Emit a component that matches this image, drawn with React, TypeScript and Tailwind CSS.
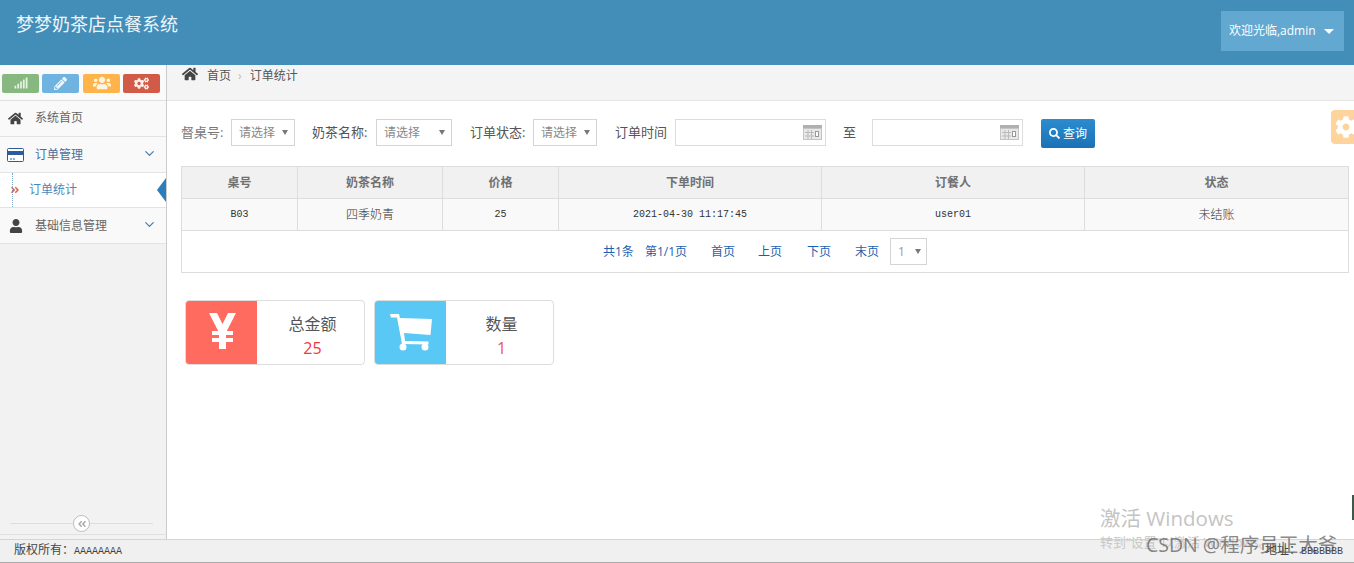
import type { ReactNode } from 'react'
import { ChevronDown } from 'lucide-react'
import {
  FaAngleDoubleLeft,
  FaAngleDoubleRight,
  FaCog,
  FaCogs,
  FaHome,
  FaPencilAlt,
  FaSearch,
  FaSignal,
  FaUser,
  FaUsers,
} from 'react-icons/fa'

const sans = 'font-["Open_Sans","Noto_Sans_CJK_SC",sans-serif]'

const columns = [
  { title: '桌号', width: 'w-[116px]', value: 'B03', mono: true },
  { title: '奶茶名称', width: 'w-[145px]', value: '四季奶青', mono: false },
  { title: '价格', width: 'w-[116px]', value: '25', mono: true },
  { title: '下单时间', width: 'w-[263px]', value: '2021-04-30 11:17:45', mono: true },
  { title: '订餐人', width: 'w-[263px]', value: 'user01', mono: true },
  { title: '状态', width: 'flex-1', value: '未结账', mono: false },
]

function Caret() {
  return <span className="h-0 w-0 border-x-[3px] border-t-[5px] border-x-transparent border-t-[#777]" />
}

function FakeSelect({ width, label }: { width: string; label: string }) {
  return (
    <div className={`${width} flex h-[27px] items-center justify-between border border-[#d5d5d5] bg-white pl-[7px] pr-[6px] text-[12px] text-[#888]`}>
      <span className="pt-[1px]">{label}</span>
      <Caret />
    </div>
  )
}

function CalendarIcon() {
  return (
    <svg width="19" height="15" viewBox="0 0 19 15">
      <rect x="0" y="0" width="19" height="15" fill="#e8e8e8" />
      <rect x="0" y="0" width="19" height="3" fill="#b0b0b0" />
      <rect x="0.5" y="3.500" width="18" height="11" fill="none" stroke="#c4c4c4" />
      <path d="M2 7.500H11M2 11H11M5 5V14M8.500 5V14" stroke="#bbb" fill="none" />
      <rect x="12.500" y="6.500" width="3" height="5" fill="#fff" stroke="#999" />
    </svg>
  )
}

function CardIcon() {
  return (
    <svg width="17" height="14" viewBox="0 0 17 14">
      <rect x="0.5" y="0.500" width="16" height="13" rx="1" fill="#fff" stroke="#2d5c9b" />
      <rect x="1" y="3" width="15" height="4" fill="#2d5c9b" />
      <path d="M3 11H5M6 11H8" stroke="#2d5c9b" />
    </svg>
  )
}

function YenIcon() {
  return (
    <svg width="27" height="36" viewBox="0 0 27 36" fill="#fff">
      <path d="M0 0H8L13.500 11L19 0H27L17.800 18H24V22H17V25H24V29H17V36H10V29H3V25H10V22H3V18H9.200Z" />
    </svg>
  )
}

function CartIcon() {
  return (
    <svg width="42" height="37" viewBox="0 0 42 37" fill="#fff" className="mt-[4px]">
      <path d="M0 0H9L10 4L42 5L40.500 21L14 19L15 27L38.500 27.500V30.500L12 30L7 3.500H1Z" />
      <circle cx="13" cy="33" r="3.500" />
      <circle cx="35" cy="33" r="3.500" />
    </svg>
  )
}

function DateInput() {
  return (
    <div className="flex h-[27px] w-[151px] items-center justify-end border border-[#dcdcdc] bg-white pr-[3px]">
      <CalendarIcon />
    </div>
  )
}

function NavRow({ icon, label, open, text }: { icon: ReactNode; label: string; open?: boolean; text: string }) {
  return (
    <div className="flex h-[36px] items-center border-b border-[#e3e3e3] bg-[#f9f9f9] pl-[7px] pr-[9px]">
      <span className="flex w-[28px] justify-start">{icon}</span>
      <span className={`text-[12px] ${text}`}>{label}</span>
      {open && <ChevronDown size={15} strokeWidth={2} className="mb-[3px] ml-auto text-[#4a7fb0]" />}
    </div>
  )
}

function StatCard({ color, icon, label, value, valueColor }: { color: string; icon: ReactNode; label: string; value: string; valueColor: string }) {
  return (
    <div className="flex h-[65px] w-[180px] overflow-hidden rounded-[4px] border border-[#dddddd] bg-white">
      <div className={`${color} flex w-[71px] items-center justify-center pb-[4px] pl-[1px]`}>{icon}</div>
      <div className="flex flex-1 flex-col items-center justify-center pl-[4px] pt-[7px] text-[16px] leading-[24px] text-[#555]">
        <span>{label}</span>
        <span className={valueColor}>{value}</span>
      </div>
    </div>
  )
}

export default function App() {
  return (
    <div className={`${sans} relative flex h-[563px] w-[1354px] flex-col overflow-hidden bg-white text-[#555]`}>
      {/* header */}
      <header className="flex h-[65px] shrink-0 justify-between bg-[#438eb9]">
        <h1 className="pl-[16px] pt-[12px] text-[18px] leading-[24px] font-normal text-[#eef5fa]">梦梦奶茶店点餐系统</h1>
        <div className="mr-[10px] mt-[11px] flex h-[40px] w-[123px] items-center bg-[#62a8d1] pl-[8px] text-[12px] text-white">
          欢迎光临,admin
          <span className="ml-[8px] h-0 w-0 border-x-[5px] border-t-[5px] border-x-transparent border-t-white" />
        </div>
      </header>

      <div className="flex min-h-0 flex-1">
        {/* sidebar */}
        <aside className="flex w-[167px] shrink-0 flex-col border-r border-[#cccccc] bg-[#f2f2f2]">
          <div className="flex h-[36px] shrink-0 items-center gap-[3px] border-b border-[#e0e0e0] bg-[#fafafa] pl-[2px] pt-[1px]">
            <span className="flex h-[19px] w-[37px] items-center justify-center rounded-[2px] bg-[#87b87f] text-[#e8f2e6]"><FaSignal size={14} /></span>
            <span className="flex h-[19px] w-[37px] items-center justify-center rounded-[2px] bg-[#6fb3e0] text-[#eef7fc]"><FaPencilAlt size={13} /></span>
            <span className="ml-[1px] flex h-[19px] w-[37px] items-center justify-center rounded-[2px] bg-[#ffb44b] text-[#fff4e2]"><FaUsers size={18} /></span>
            <span className="flex h-[19px] w-[37px] items-center justify-center rounded-[2px] bg-[#d15b47] text-[#fdeeea]"><FaCogs size={15} /></span>
          </div>
          <NavRow icon={<FaHome size={15} className="ml-[1px] text-[#444]" />} label="系统首页" text="pb-[1px] text-[#666]" />
          <NavRow icon={<CardIcon />} label="订单管理" text="pt-[1px] text-[#4a6f9a]" open />
          <div className="relative flex h-[35px] items-center border-b border-[#e3e3e3] bg-white pl-[10px]">
            <span className="absolute left-[12px] top-0 h-full border-l border-dotted border-[#7aa6c8]" />
            <FaAngleDoubleRight size={10} className="relative text-[#d9634c]" />
            <span className="ml-[9px] text-[12px] text-[#4b88b8]">订单统计</span>
            <span className="absolute right-0 top-[5px] h-0 w-0 border-y-[12px] border-r-[9px] border-y-transparent border-r-[#2b7dbc]" />
          </div>
          <NavRow icon={<FaUser size={14} className="ml-[2px] text-[#444]" />} label="基础信息管理" text="pt-[1px] text-[#666]" open />
          <div className="mb-[4px] mt-auto flex h-[28px] items-center border-b border-[#e0e0e0] pl-[10px] pt-[5px]">
            <div className="relative flex w-[143px] items-center justify-center border-t border-[#dddddd]">
              <span className="absolute flex h-[17px] w-[17px] items-center justify-center rounded-full border border-[#bbbbbb] bg-white text-[#aaa]">
                <FaAngleDoubleLeft size={10} />
              </span>
            </div>
          </div>
        </aside>

        {/* main */}
        <main className="relative min-w-0 flex-1">
          <div className="flex h-[36px] items-start border-b border-[#e5e5e5] bg-[#f4f4f4] pl-[15px] pt-[1px] text-[12px]">
            <FaHome size={16} className="text-[#444]" />
            <span className="ml-[9px] pt-[1px] text-[#555]">首页</span>
            <span className="ml-[7px] mr-[8px] pt-[1px] text-[#bbb]">›</span>
            <span className="pt-[1px] text-[#555]">订单统计</span>
          </div>

          <div className="flex items-start pl-[14px] pt-[18px] text-[13px]">
            <span className="w-[50px] pt-[4px] text-[#777]">督桌号:</span>
            <FakeSelect width="w-[64px]" label="请选择" />
            <span className="ml-[17px] w-[64px] pt-[4px]">奶茶名称:</span>
            <FakeSelect width="w-[76px]" label="请选择" />
            <span className="ml-[18px] w-[63px] pt-[4px]">订单状态:</span>
            <FakeSelect width="w-[64px]" label="请选择" />
            <span className="ml-[18px] w-[60px] pt-[4px]">订单时间</span>
            <DateInput />
            <span className="ml-[17px] w-[29px] pt-[4px]">至</span>
            <DateInput />
            <button className="ml-[18px] flex h-[29px] w-[54px] items-center justify-center gap-[3px] rounded-[2px] bg-gradient-to-b from-[#2b8ccf] to-[#1b72b5] text-[12px] text-white">
              <FaSearch size={11} />
              查询
            </button>
          </div>

          <div className="ml-[14px] mr-[5px] mt-[18px] border border-[#dddddd] text-[12px]">
            <div className="flex h-[32px] border-b border-[#dddddd] bg-[#f1f1f1] font-bold text-[#707070]">
              {columns.map((c, i) => (
                <div key={c.title} className={`${c.width} flex items-center justify-center ${i < 5 ? 'border-r border-[#dddddd]' : ''}`}>{c.title}</div>
              ))}
            </div>
            <div className="flex h-[32px] border-b border-[#dddddd] bg-[#f9f9f9] text-[#333]">
              {columns.map((c, i) => (
                <div key={c.title} className={`${c.width} flex items-center justify-center ${i < 5 ? 'border-r border-[#dddddd]' : ''} ${c.mono ? 'font-["Liberation_Mono",monospace] text-[10px]' : 'font-light'}`}>{c.value}</div>
              ))}
            </div>
            <div className="flex h-[41px] items-center pl-[421px] text-[#1a5fb0]">
              <span>共1条</span>
              <span className="ml-[11px]">第1/1页</span>
              <span className="ml-[24px]">首页</span>
              <span className="ml-[23px]">上页</span>
              <span className="ml-[25px]">下页</span>
              <span className="ml-[24px]">末页</span>
              <div className="ml-[11px] flex h-[27px] w-[37px] items-center justify-between border border-[#d5d5d5] pl-[7px] pr-[5px] text-[#999]">
                <span>1</span>
                <Caret />
              </div>
            </div>
          </div>

          <div className="ml-[18px] mt-[27px] flex gap-[9px]">
            <StatCard color="bg-[#ff6b5f]" icon={<YenIcon />} label="总金额" value="25" valueColor="text-[#f5353f]" />
            <StatCard color="bg-[#59c8f5]" icon={<CartIcon />} label="数量" value="1" valueColor="text-[#f0506e]" />
          </div>

          {/* settings tab */}
          <div className="absolute right-0 top-[45px] flex h-[34px] w-[23px] items-center justify-start overflow-hidden rounded-l-[4px] bg-[#ffd39c] pl-[4px] text-white">
            <FaCog size={22} className="shrink-0" />
          </div>
        </main>
      </div>

      {/* footer */}
      <footer className="flex h-[24px] shrink-0 items-center justify-between border-y border-t-[#d5d5d5] border-b-[#aaaaaa] bg-[#f0f0f0] pl-[14px] pr-[11px] font-['Liberation_Mono','Noto_Sans_CJK_SC',monospace] text-[12px] text-[#444]">
        <span>版权所有：<span className="text-[10px]">AAAAAAAA</span></span>
        <span>地址：<span className="text-[10px]">BBBBBBB</span></span>
      </footer>

      {/* windows watermark and blog stamp over the page */}
      <div className="pointer-events-none absolute left-[1100px] top-[505px] text-[20.500px] leading-[26px] text-[#c4c4c4]">激活 Windows</div>
      <div className="pointer-events-none absolute left-[1100px] top-[533px] text-[13px] leading-[18px] text-[#c8c8c8]">转到“设置”以激活 Windows。</div>
      <div className="pointer-events-none absolute left-[1146px] top-[533px] text-[19.500px] leading-[24px] text-[#555]/70">CSDN @程序员正大爷</div>
      <div className="absolute right-0 top-[495px] h-[25px] w-[2px] bg-[#3c5a4a]" />
    </div>
  )
}
